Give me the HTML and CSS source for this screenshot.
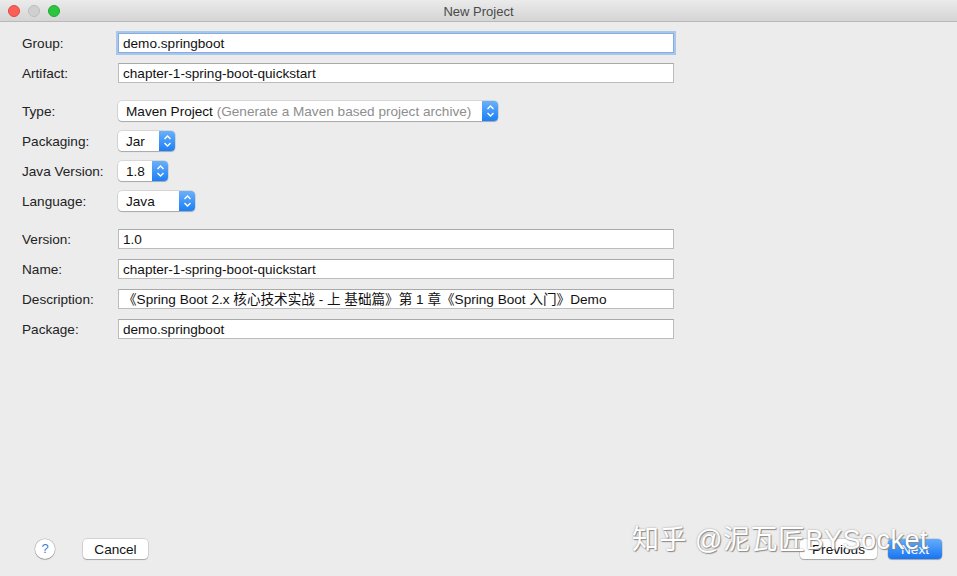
FILE: index.html
```html
<!DOCTYPE html>
<html lang="en">
<head>
<meta charset="UTF-8">
<meta name="viewport" content="width=device-width, initial-scale=1.0">
<title>New Project</title>
<link rel="stylesheet" href="styles.css">
</head>
<body>

<!-- Fenster-Titelleiste -->
<header class="titlebar">
  <div class="lights">
    <span class="light light-red"></span>
    <span class="light light-gray"></span>
    <span class="light light-green"></span>
  </div>
  <div class="title">New Project</div>
</header>

<!-- Formular -->
<main class="form">
  <div class="group">
    <div class="row">
      <label class="label">Group:</label>
      <div class="field field-focus">demo.springboot</div>
    </div>
    <div class="row">
      <label class="label">Artifact:</label>
      <div class="field">chapter-1-spring-boot-quickstart</div>
    </div>
  </div>

  <div class="group">
    <div class="row">
      <label class="label">Type:</label>
      <div class="select select-type">
        <span class="select-value">Maven Project <span class="hint">(Generate a Maven based project archive)</span></span>
        <span class="select-arrow"><svg width="9" height="14" viewBox="0 0 9 14"><path d="M1.5 5 L4.5 2 L7.5 5 M1.5 9 L4.5 12 L7.5 9" fill="none" stroke="#fff" stroke-width="1.4"/></svg></span>
      </div>
    </div>
    <div class="row">
      <label class="label">Packaging:</label>
      <div class="select select-jar">
        <span class="select-value">Jar</span>
        <span class="select-arrow"><svg width="9" height="14" viewBox="0 0 9 14"><path d="M1.5 5 L4.5 2 L7.5 5 M1.5 9 L4.5 12 L7.5 9" fill="none" stroke="#fff" stroke-width="1.4"/></svg></span>
      </div>
    </div>
    <div class="row">
      <label class="label">Java Version:</label>
      <div class="select select-java-version">
        <span class="select-value">1.8</span>
        <span class="select-arrow"><svg width="9" height="14" viewBox="0 0 9 14"><path d="M1.5 5 L4.5 2 L7.5 5 M1.5 9 L4.5 12 L7.5 9" fill="none" stroke="#fff" stroke-width="1.4"/></svg></span>
      </div>
    </div>
    <div class="row">
      <label class="label">Language:</label>
      <div class="select select-language">
        <span class="select-value">Java</span>
        <span class="select-arrow"><svg width="9" height="14" viewBox="0 0 9 14"><path d="M1.5 5 L4.5 2 L7.5 5 M1.5 9 L4.5 12 L7.5 9" fill="none" stroke="#fff" stroke-width="1.4"/></svg></span>
      </div>
    </div>
  </div>

  <div class="group">
    <div class="row">
      <label class="label">Version:</label>
      <div class="field">1.0</div>
    </div>
    <div class="row">
      <label class="label">Name:</label>
      <div class="field">chapter-1-spring-boot-quickstart</div>
    </div>
    <div class="row">
      <label class="label">Description:</label>
      <div class="field">《Spring Boot 2.x 核心技术实战 - 上 基础篇》第 1 章《Spring Boot 入门》Demo</div>
    </div>
    <div class="row">
      <label class="label">Package:</label>
      <div class="field">demo.springboot</div>
    </div>
  </div>
</main>

<!-- Fußleiste mit Buttons -->
<footer class="footer">
  <span class="help">?</span>
  <span class="button button-cancel">Cancel</span>
  <span class="spacer"></span>
  <span class="button button-previous">Previous</span>
  <span class="button button-next">Next</span>
</footer>

<!-- Wasserzeichen -->
<div class="watermark">知乎 @泥瓦匠BYSocket</div>

</body>
</html>
```

FILE: styles.css
```css
/* Grundlayout */
body {
  margin: 0;
  height: 576px;
  overflow: hidden;
  display: flex;
  flex-direction: column;
  position: relative;
  background-color: #ececec;
  font-family: "Liberation Sans", "Noto Sans CJK SC", sans-serif;
  font-size: 13.6px;
  color: #1a1a1a;
}

/* Titelleiste */
.titlebar {
  height: 21px;
  position: relative;
  background: linear-gradient(#ebebeb, #d5d5d5);
  border-bottom: 1px solid #b9b9b9;
}
.lights {
  position: absolute;
  top: 5px;
  left: 8px;
  display: flex;
  gap: 8px;
}
.light {
  width: 12px;
  height: 12px;
  border-radius: 50%;
  box-sizing: border-box;
}
.light-red {
  background-color: #fc5f57;
  border: 1px solid #df4a42;
}
.light-gray {
  background-color: #d0d0d0;
  border: 1px solid #bdbdbd;
}
.light-green {
  background-color: #2cc53f;
  border: 1px solid #1eab2f;
}
.title {
  text-align: center;
  font-size: 13px;
  line-height: 23px;
  color: #4a4a4a;
}

/* Formular */
.form {
  padding: 6px 0 0 22px;
}
.group {
  margin-bottom: 8px;
}
.row {
  display: flex;
  align-items: center;
  height: 30px;
}
.label {
  width: 96px;
  flex-shrink: 0;
  color: #222;
}
.field {
  width: 556px;
  height: 20px;
  box-sizing: border-box;
  padding: 0 4px;
  line-height: 19px;
  background-color: #fff;
  border: 1px solid #bcbcbc;
  border-top-color: #a9a9a9;
  color: #111;
  white-space: nowrap;
}
.field-focus {
  border-color: #86ace0;
  box-shadow: 0 0 0 2px #a9c7ec;
}

/* Auswahlfelder */
.select {
  display: flex;
  height: 20px;
  background-color: #fff;
  border-radius: 4px;
  box-shadow: 0 0 0 0.5px rgba(0, 0, 0, 0.18), 0 1px 1px rgba(0, 0, 0, 0.22);
  overflow: hidden;
}
.select-value {
  flex: 1;
  padding-left: 8px;
  line-height: 21px;
  color: #111;
  white-space: nowrap;
}
.hint {
  color: #8e8e8e;
}
.select-arrow {
  width: 16px;
  display: flex;
  align-items: center;
  justify-content: center;
  background: linear-gradient(#6ab0fa, #1b7ff6);
}
.select-type { width: 380px; }
.select-jar { width: 57px; }
.select-java-version { width: 50px; }
.select-language { width: 77px; }

/* Fußleiste */
.footer {
  margin-top: auto;
  display: flex;
  align-items: center;
  padding: 0 15px 17px 35px;
}
.help {
  width: 20px;
  height: 20px;
  box-sizing: border-box;
  border-radius: 50%;
  background-color: #fff;
  box-shadow: 0 0 0 0.5px rgba(0, 0, 0, 0.25), 0 1px 1px rgba(0, 0, 0, 0.2);
  color: #3a7fd6;
  text-align: center;
  line-height: 20px;
  font-size: 13px;
  margin-right: 28px;
}
.button {
  height: 20px;
  line-height: 21px;
  box-sizing: border-box;
  text-align: center;
  border-radius: 4px;
  background-color: #fff;
  box-shadow: 0 0 0 0.5px rgba(0, 0, 0, 0.2), 0 1px 1px rgba(0, 0, 0, 0.22);
  color: #111;
}
.button-cancel { width: 65px; }
.spacer { flex: 1; }
.button-previous {
  width: 77px;
  margin-right: 11px;
}
.button-next {
  width: 54px;
  color: #fff;
  background: linear-gradient(#64adfb, #1875f2);
}

/* Wasserzeichen */
.watermark {
  position: absolute;
  left: 632px;
  top: 518px;
  font-size: 27px;
  color: #fff;
  letter-spacing: 0.5px;
  text-shadow: 1px 1px 1px #8a8a8a, 0 0 2px rgba(0, 0, 0, 0.35);
  white-space: nowrap;
}
```
